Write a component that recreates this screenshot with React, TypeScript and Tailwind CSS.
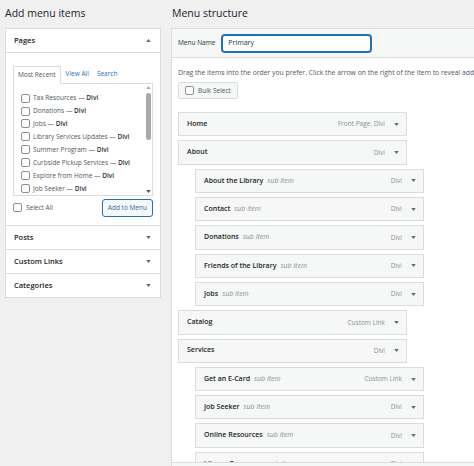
import { ReactNode } from 'react';

const FONT = { fontFamily: '"Open Sans", "Noto Sans", Arial, sans-serif' };

const PAGES = [
  'Tax Resources',
  'Donations',
  'Jobs',
  'Library Services Updates',
  'Summer Program',
  'Curbside Pickup Services',
  'Explore from Home',
  'Job Seeker',
];

interface MenuItem {
  title: string;
  type: string;
  sub?: boolean;
}

const ITEMS: MenuItem[] = [
  { title: 'Home', type: 'Front Page, Divi' },
  { title: 'About', type: 'Divi' },
  { title: 'About the Library', type: 'Divi', sub: true },
  { title: 'Contact', type: 'Divi', sub: true },
  { title: 'Donations', type: 'Divi', sub: true },
  { title: 'Friends of the Library', type: 'Divi', sub: true },
  { title: 'Jobs', type: 'Divi', sub: true },
  { title: 'Catalog', type: 'Custom Link' },
  { title: 'Services', type: 'Divi' },
  { title: 'Get an E-Card', type: 'Custom Link', sub: true },
  { title: 'Job Seeker', type: 'Divi', sub: true },
  { title: 'Online Resources', type: 'Divi', sub: true },
  { title: 'Library Resources', type: 'Divi', sub: true },
];

function Checkbox() {
  return <span className="inline-block h-[9px] w-[9px] shrink-0 rounded-[2px] border border-[#8c8f94] bg-white" />;
}

function Caret({ up }: { up?: boolean }) {
  return (
    <svg width="5" height="3" viewBox="0 0 6 4" className="shrink-0">
      <path d={up ? 'M0 4 L3 0 L6 4 Z' : 'M0 0 L6 0 L3 4 Z'} fill="#646970" />
    </svg>
  );
}

function Section({ title, children }: { title: string; children?: ReactNode }) {
  return (
    <div className="border-t border-[#dcdcde]">
      <div className="flex h-[23px] items-center justify-between pr-[9px] pl-[8px]">
        <span className="text-[7.5px] font-semibold text-[#1d2327]">{title}</span>
        <Caret />
      </div>
      {children}
    </div>
  );
}

export default function App() {
  return (
    <div className="flex h-[466px] w-[474px] overflow-hidden bg-[#f0f0f1] text-[#2c3338]" style={FONT}>
      {/* left column */}
      <div className="ml-[5px] w-[156px] shrink-0">
        <div className="flex h-[28px] items-center text-[10.5px] text-[#1d2327]">Add menu items</div>
        <div className="border border-[#dcdcde] bg-white">
          <div className="flex h-[23px] items-center justify-between pr-[9px] pl-[8px]">
            <span className="text-[7.5px] font-semibold text-[#1d2327]">Pages</span>
            <Caret up />
          </div>
          <div className="border-t border-[#dcdcde] px-[7px] pt-[13px] pb-[8px]">
            <div className="flex text-[6.5px]">
              <span className="relative z-10 -mb-px border border-b-0 border-[#dcdcde] bg-white px-[4px] pt-[3px] pb-[4px] text-[#50575e]">
                Most Recent
              </span>
              <span className="px-[5px] pt-[3px] text-[#2271b1]">View All</span>
              <span className="px-[3px] pt-[3px] text-[#2271b1]">Search</span>
            </div>
            <div className="flex h-[113px] border border-[#dcdcde] bg-white">
              <div className="flex-1 pt-[8px] pl-[7px]">
                {PAGES.map((p) => (
                  <div key={p} className="flex h-[12.9px] items-center gap-[3px] text-[6.5px] text-[#50575e]">
                    <Checkbox />
                    <span className="whitespace-nowrap">
                      {p} — <span className="font-semibold text-[#2c3338]">Divi</span>
                    </span>
                  </div>
                ))}
              </div>
              <div className="flex w-[8px] flex-col items-center py-[2px]">
                <svg width="5" height="3" viewBox="0 0 6 4"><path d="M0 4 L3 0 L6 4 Z" fill="#a7aaad" /></svg>
                <div className="mt-[4px] h-[47px] w-[5px] rounded-full bg-[#a7aaad]" />
                <div className="flex-1" />
                <svg width="5" height="3" viewBox="0 0 6 4"><path d="M0 0 L6 0 L3 4 Z" fill="#50575e" /></svg>
              </div>
            </div>
            <div className="mt-[3px] flex items-center justify-between">
              <div className="flex items-center gap-[4px] text-[6.5px] text-[#50575e]">
                <Checkbox />
                <span>Select All</span>
              </div>
              <span className="flex h-[18px] items-center rounded-[3px] border border-[#2271b1] bg-[#f6f7f7] px-[5px] text-[6.5px] text-[#2271b1]">
                Add to Menu
              </span>
            </div>
          </div>
          <Section title="Posts" />
          <Section title="Custom Links" />
          <Section title="Categories" />
        </div>
      </div>

      {/* right column */}
      <div className="ml-[10px] flex min-w-0 flex-1 flex-col">
        <div className="flex h-[28px] shrink-0 items-center pl-[1px] text-[10.5px] text-[#1d2327]">Menu structure</div>
        <div className="flex min-h-0 w-[330px] flex-1 flex-col border-t border-l border-[#dcdcde] bg-white">
          <div className="flex h-[29px] shrink-0 items-center gap-[7px] border-b border-[#dcdcde] bg-[#f6f7f7] px-[6px]">
            <span className="text-[6.5px] text-[#2c3338]">Menu Name</span>
            <div className="flex h-[17px] w-[149px] items-center rounded-[3px] border border-[#2271b1] bg-white px-[5px] text-[7px] text-[#2c3338] shadow-[0_0_0_1px_#2271b1]">
              Primary
            </div>
          </div>
          <div className="min-h-0 flex-1 overflow-hidden px-[6px]">
            <p className="mt-[10px] whitespace-nowrap text-[6.8px] text-[#50575e]">
              Drag the items into the order you prefer. Click the arrow on the right of the item to reveal additional configuration options.
            </p>
            <div className="mt-[4px] flex h-[17px] w-[60px] items-center gap-[4px] rounded-[2px] border border-[#dcdcde] bg-[#f6f7f7] px-[6px] text-[6.5px] text-[#50575e]">
              <Checkbox />
              <span className="whitespace-nowrap">Bulk Select</span>
            </div>
            <div className="mt-[13px] flex flex-col gap-[4px]">
              {ITEMS.map((it) => (
                <div
                  key={it.title}
                  className={`flex h-[24.3px] w-[229px] shrink-0 items-center justify-between border border-[#dcdcde] bg-[#f6f7f7] pr-[7px] pl-[8px] ${it.sub ? 'ml-[17px]' : ''}`}
                >
                  <span className="whitespace-nowrap text-[7px] font-semibold text-[#1d2327]">
                    {it.title}
                    {it.sub && <span className="ml-[4px] font-normal italic text-[#8c8f94]">sub item</span>}
                  </span>
                  <span className="flex items-center gap-[9px] text-[6.5px] text-[#8c8f94]">
                    {it.type}
                    <Caret />
                  </span>
                </div>
              ))}
            </div>
          </div>
          <div className="h-[4px] shrink-0 border-t border-[#dcdcde] bg-[#f6f7f7]" />
        </div>
      </div>
    </div>
  );
}
